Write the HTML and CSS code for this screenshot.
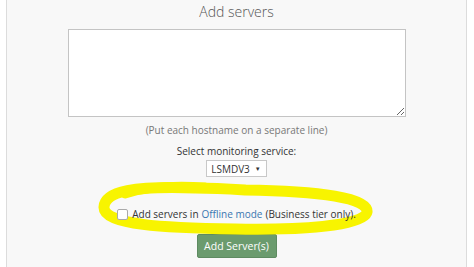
FILE: index.html
```html
<!DOCTYPE html>
<html>
<head>
<meta charset="utf-8">
<link rel="stylesheet" href="styles.css">
</head>
<body>
<div class="page">
  <h2 class="title">Add servers</h2>
  <textarea class="hosts"></textarea>
  <p class="hint">(Put each hostname on a separate line)</p>
  <p class="label">Select monitoring service:</p>
  <div class="select-wrap"><span class="select">LSMDV3 <span class="caret">&#9660;</span></span></div>
  <div class="offline">
    <label class="check-row"><span class="box"></span>Add servers in <a class="link">Offline mode</a> (Business tier only).</label>
    <svg class="mark" width="300" height="70" viewBox="0 0 300 70">
      <path d="M 150 9 C 225 10 274 17 272 31 C 270 46 200 49 140 48 C 70 47 8 44 9 26 C 10 10 40 5 100 7 C 120 7 135 8 150 9" fill="none" stroke="#f8f400" stroke-width="11" stroke-linecap="round"/>
      <path d="M 30 13 C 50 6 80 4 110 6" fill="none" stroke="#f8f400" stroke-width="9" stroke-linecap="round"/>
    </svg>
  </div>
  <div class="actions"><button class="btn">Add Server(s)</button></div>
</div>
</body>
</html>
```
FILE: styles.css
```css
html, body {
  margin: 0;
  padding: 0;
  background: #ffffff;
}
body {
  font-family: "Open Sans", "Liberation Sans", sans-serif;
  color: #333;
}
.page {
  margin: 0 7px 0 6px;
  border-left: 1px solid #dcdcdc;
  border-right: 1px solid #dcdcdc;
  background: #f8f8f8;
  height: 267px;
  box-sizing: border-box;
  display: flex;
  flex-direction: column;
  align-items: center;
  padding-top: 2px;
}
.title {
  margin: 0;
  font-weight: 300;
  font-size: 14px;
  line-height: 20px;
  color: #555;
}
.hosts {
  margin-top: 7px;
  width: 338px;
  height: 88px;
  box-sizing: border-box;
  border: 1px solid #c4c4c4;
  background: #fff;
  resize: vertical;
  display: block;
}
.hint {
  margin: 6px 0 0;
  font-size: 10px;
  line-height: 14px;
  color: #777;
}
.label {
  margin: 7px 0 0;
  font-size: 10px;
  line-height: 14px;
  color: #333;
}
.select-wrap {
  margin-top: 2px;
  display: flex;
}
.select {
  display: inline-flex;
  align-items: center;
  gap: 5px;
  height: 17px;
  box-sizing: border-box;
  padding: 0 5px 0 4px;
  border: 1px solid #c8c8c8;
  background: #fff;
  font-size: 10px;
  color: #333;
}
.caret {
  font-size: 6px;
}
.offline {
  position: relative;
  margin-top: 30px;
}
.check-row {
  display: flex;
  align-items: center;
  font-size: 10px;
  line-height: 14px;
  color: #333;
  position: relative;
  z-index: 1;
}
.box {
  width: 9px;
  height: 9px;
  border: 1px solid #aaa;
  border-radius: 2px;
  background: #fff;
  margin-right: 4px;
}
.link {
  color: #3a77b0;
  margin: 0 3px;
}
.mark {
  position: absolute;
  left: -22px;
  top: -26px;
  z-index: 0;
}
.actions {
  margin-top: 12px;
}
.btn {
  width: 80px;
  height: 24px;
  background: #6b9b6e;
  color: #fff;
  border: 1px solid #5e8b61;
  border-radius: 2px;
  font-family: "Open Sans", "Liberation Sans", sans-serif;
  font-size: 10.5px;
  padding: 0;
}
```
